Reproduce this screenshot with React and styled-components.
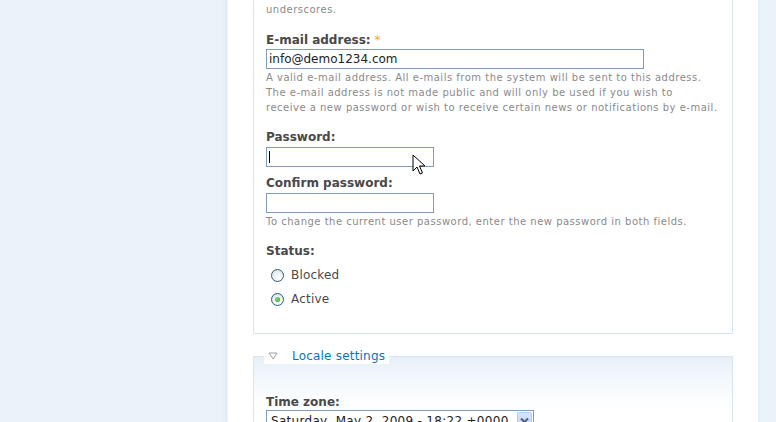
import React from 'react';
import styled, { createGlobalStyle } from 'styled-components';

const GlobalStyle = createGlobalStyle`
    html, body {
        margin: 0;
        padding: 0;
        background: #fff;
        overflow: hidden;
    }
    body {
        font-family: "DejaVu Sans", Verdana, sans-serif;
        color: #494949;
    }
`;

const Page = styled.div`
    display: flex;
    width: 776px;
    height: 422px;
    overflow: hidden;
`;

const LeftSidebar = styled.aside`
    width: 228px;
    flex-shrink: 0;
    background: linear-gradient(to right, #ebf3fa 0, #ebf3fa 221px, #e2ecf4 226px, #eef4f9 228px);
`;

const RightSidebar = styled.aside`
    flex: 1;
    background: linear-gradient(to right, #e4edf5 0, #ebf3fa 3px, #ebf3fa 100%);
`;

const Main = styled.main`
    width: 530px;
    flex-shrink: 0;
    padding: 0 25px;
    box-sizing: border-box;
`;

const Fieldset = styled.section`
    border: 1px solid #d5e5f1;
    border-top: ${p => (p.$open ? 'none' : '1px solid #d5e5f1')};
    padding: 2px 12px 0;
    height: ${p => p.$height}px;
    box-sizing: border-box;
    position: relative;
    background: ${p => (p.$tinted ? 'linear-gradient(#e7f0f8 0, #fbfdfe 40px, #fff 60px)' : '#fff')};
    margin-top: ${p => p.$gap || 0}px;
`;

const Legend = styled.div`
    position: absolute;
    top: -9px;
    left: 10px;
    background: #fff;
    padding: 0 4px;
    display: flex;
    align-items: center;
    gap: 14px;
    font-size: 12px;
    line-height: 16px;
    letter-spacing: 0.2px;
    color: #0a75bc;
`;

const Triangle = styled.svg`
    width: 10px;
    height: 8px;
`;

const Description = styled.div`
    font-size: 10px;
    line-height: 15px;
    color: #8a8a8a;
    letter-spacing: 0.5px;
    white-space: nowrap;
    margin-top: ${p => p.$gap || 0}px;
`;

const Label = styled.div`
    font-size: 12px;
    font-weight: bold;
    line-height: 15px;
    color: #494949;
    margin-top: ${p => p.$gap || 0}px;
`;

const Required = styled.span`
    color: #f6a623;
    font-weight: normal;
    margin-left: 4px;
`;

const InputWrap = styled.div`
    position: relative;
    margin-top: ${p => p.$gap || 0}px;
    width: ${p => p.$width}px;
`;

const TextInput = styled.div`
    height: 20px;
    box-sizing: border-box;
    border: 1px solid #7f9db9;
    padding: 0 2px;
    font-size: 12px;
    line-height: 18px;
    color: #222;
    display: flex;
    align-items: center;
`;

const Caret = styled.span`
    width: 1px;
    height: 12px;
    background: #000;
`;

const Pointer = styled.svg`
    position: absolute;
    left: 146px;
    top: 7px;
    width: 14px;
    height: 22px;
`;

const RadioList = styled.div`
    display: flex;
    flex-direction: column;
    gap: 8px;
    margin-top: 8px;
    padding-left: 5px;
`;

const RadioRow = styled.div`
    display: flex;
    align-items: center;
    gap: 7px;
    height: 16px;
    font-size: 12px;
    letter-spacing: 0.2px;
    color: #494949;
`;

const RadioDot = styled.span`
    width: 11px;
    height: 11px;
    border-radius: 50%;
    border: 1px solid #2b5d8c;
    background: radial-gradient(circle at 60% 65%, #ffffff 0, #f2f2f0 40%, #d9d9d4 100%);
    display: flex;
    align-items: center;
    justify-content: center;

    &::after {
        content: '';
        width: 5px;
        height: 5px;
        border-radius: 50%;
        background: ${p => (p.$checked ? 'radial-gradient(circle at 40% 40%, #7ee07a, #21a121)' : 'transparent')};
    }
`;

const Select = styled.div`
    margin-top: 0;
    width: 268px;
    height: 21px;
    box-sizing: border-box;
    border: 1px solid #7f9db9;
    display: flex;
    align-items: center;
    font-size: 12px;
    letter-spacing: 0.3px;
    color: #222;
`;

const SelectText = styled.span`
    flex: 1;
    padding-left: 4px;
    white-space: nowrap;
    overflow: hidden;
`;

const SelectButton = styled.span`
    width: 15px;
    height: 17px;
    margin-right: 1px;
    border: 1px solid #b4c9ef;
    border-radius: 2px;
    background: linear-gradient(#dbe6fb, #b9cdf5);
    box-sizing: border-box;
    display: flex;
    align-items: center;
    justify-content: center;
`;

const App = () => {
    return (
        <>
            <GlobalStyle />
            <Page>
                <LeftSidebar />
                <Main>
                    <Fieldset $open $height={334}>
                        <Description>underscores.</Description>

                        <Label $gap={16}>
                            E-mail address:<Required>*</Required>
                        </Label>
                        <InputWrap $gap={1} $width={378}>
                            <TextInput>info@demo1234.com</TextInput>
                        </InputWrap>
                        <Description $gap={1}>
                            A valid e-mail address. All e-mails from the system will be sent to this address.
                            <br />
                            The e-mail address is not made public and will only be used if you wish to
                            <br />
                            receive a new password or wish to receive certain news or notifications by e-mail.
                        </Description>

                        <Label $gap={15}>Password:</Label>
                        <InputWrap $gap={2} $width={168}>
                            <TextInput>
                                <Caret />
                            </TextInput>
                            <Pointer viewBox="0 0 14 22">
                                <path
                                    d="M1 1 L1 17 L5 13 L8 20 L10.5 19 L7.5 12 L13 12 Z"
                                    fill="#fff"
                                    stroke="#000"
                                    strokeWidth="1"
                                    strokeLinejoin="miter"
                                />
                            </Pointer>
                        </InputWrap>

                        <Label $gap={9}>Confirm password:</Label>
                        <InputWrap $gap={2} $width={168}>
                            <TextInput />
                        </InputWrap>
                        <Description $gap={1}>
                            To change the current user password, enter the new password in both fields.
                        </Description>

                        <Label $gap={15}>Status:</Label>
                        <RadioList>
                            <RadioRow>
                                <RadioDot />
                                Blocked
                            </RadioRow>
                            <RadioRow>
                                <RadioDot $checked />
                                Active
                            </RadioRow>
                        </RadioList>
                    </Fieldset>

                    <Fieldset $tinted $gap={22} $height={80}>
                        <Legend>
                            <Triangle viewBox="0 0 10 8">
                                <path d="M1 1 L9 1 L5 7 Z" fill="#fff" stroke="#a0a0a0" strokeWidth="1" />
                            </Triangle>
                            Locale settings
                        </Legend>
                        <Label $gap={36}>Time zone:</Label>
                        <Select>
                            <SelectText>Saturday, May 2, 2009 - 18:22 +0000</SelectText>
                            <SelectButton>
                                <svg width="9" height="7" viewBox="0 0 9 7">
                                    <path d="M1 1.5 L4.5 5 L8 1.5" fill="none" stroke="#4d6185" strokeWidth="2" />
                                </svg>
                            </SelectButton>
                        </Select>
                    </Fieldset>
                </Main>
                <RightSidebar />
            </Page>
        </>
    );
};

export default App;
